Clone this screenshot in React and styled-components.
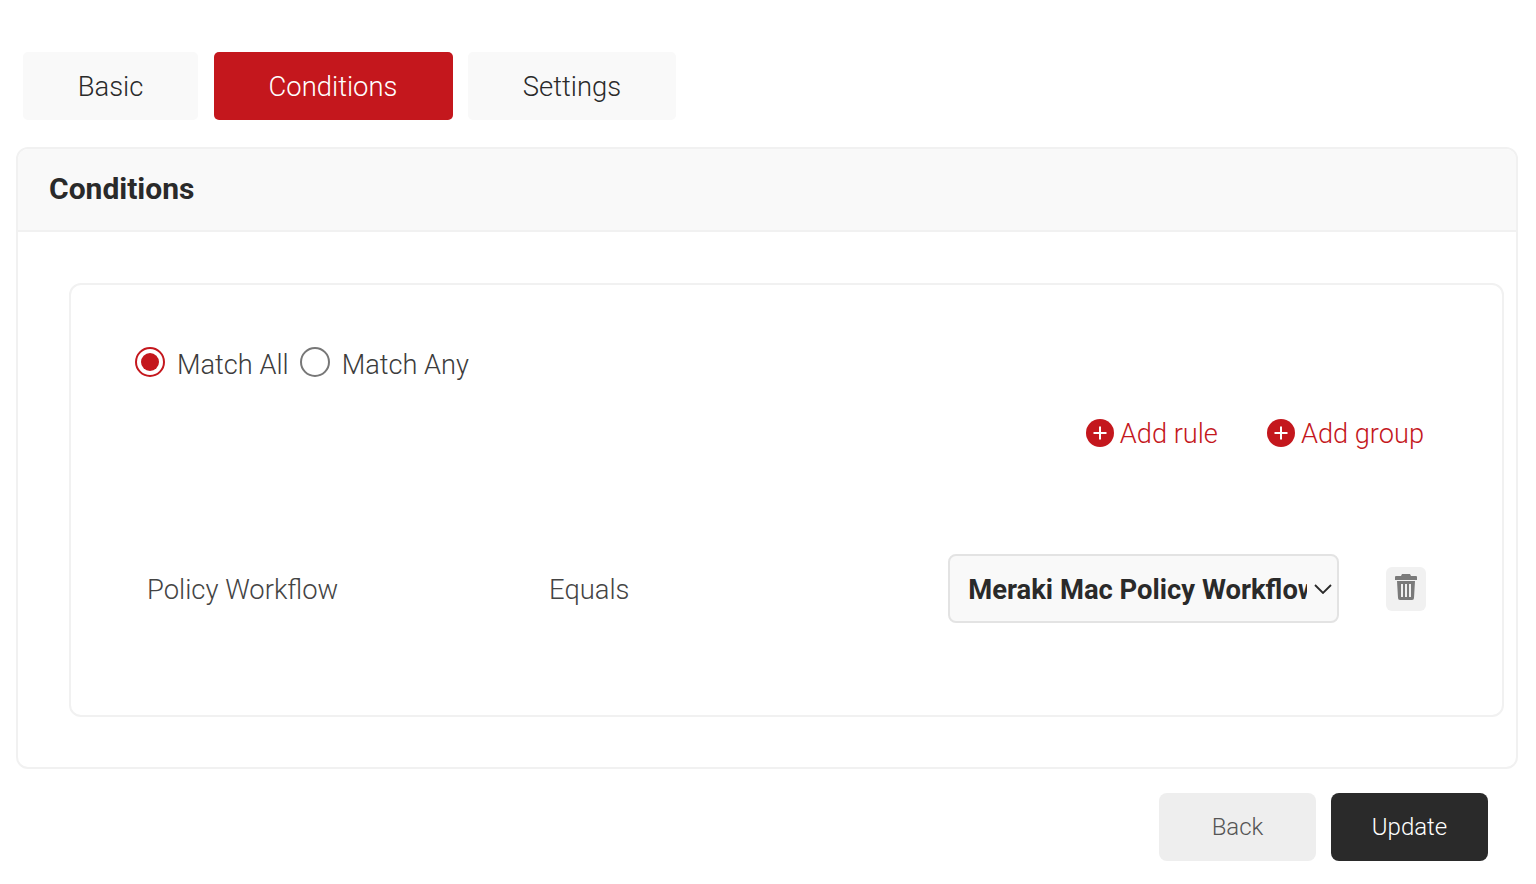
import React, { useState } from "react"
import styled, { createGlobalStyle } from "styled-components"

const Global = createGlobalStyle`
    html, body {
        margin: 0;
        background: #fff;
    }
    body {
        font-family: Roboto, "Liberation Sans", sans-serif;
        font-weight: 300;
        color: #2a2a2a;
    }
`

const Page = styled.div`
    width: 1536px;
    height: 884px;
    box-sizing: border-box;
    padding: 52px 18px 0 16px;
    overflow: hidden;
`

const Tabs = styled.div`
    display: flex;
    gap: 15.5px;
    padding-left: 7px;
    margin-bottom: 27px;
`

const Tab = styled.button`
    height: 68px;
    width: ${p => p.$width}px;
    padding: 2px 0 0;
    border: 0;
    border-radius: 5px;
    background: ${p => p.$active ? "#c4171d" : "#f9f9f9"};
    color: ${p => p.$active ? "#fff" : "#2a2a2a"};
    font: 300 27.4px Roboto, sans-serif;
`

const Card = styled.section`
    height: 622px;
    box-sizing: border-box;
    border: 2px solid #f1f1f1;
    border-radius: 12px;
    overflow: hidden;
`

const CardHeader = styled.header`
    height: 83px;
    box-sizing: border-box;
    display: flex;
    align-items: center;
    padding: 0 0 3px 31px;
    background: #f9f9f9;
    border-bottom: 2px solid #f1f1f1;
`

const CardTitle = styled.h2`
    margin: 0;
    font-size: 30px;
    font-weight: 700;
    color: #2a2a2a;
`

const CardBody = styled.div`
    padding: 51px 12px 0 51px;
`

const RuleBox = styled.div`
    height: 434px;
    box-sizing: border-box;
    border: 2px solid #f1f1f1;
    border-radius: 12px;
    padding: 62px 76px 0 64px;
`

const RadioRow = styled.div`
    display: flex;
    align-items: center;
    height: 36px;
`

const Radio = styled.span`
    width: 30px;
    height: 30px;
    box-sizing: border-box;
    border-radius: 50%;
    border: 2px solid ${p => p.$checked ? "#c4171d" : "#777"};
    display: flex;
    align-items: center;
    justify-content: center;
    margin-right: 12px;
    margin-top: -6px;

    &::after {
        content: "";
        width: 18px;
        height: 18px;
        border-radius: 50%;
        background: ${p => p.$checked ? "#c4171d" : "transparent"};
    }
`

const RadioLabel = styled.label`
    font-size: 27.2px;
    color: #3c3c3c;
    margin-right: 11px;
    line-height: 36px;
`

const Actions = styled.div`
    display: flex;
    justify-content: flex-end;
    gap: 49px;
    margin-top: 33px;
    padding-right: 2px;
`

const AddLink = styled.a`
    display: flex;
    align-items: center;
    gap: 6px;
    font-size: 27.2px;
    line-height: 36px;
    color: #c4171d;
`

const AddIcon = styled.svg`
    width: 28px;
    height: 28px;
    margin-top: -2px;
`

const Rule = styled.div`
    display: flex;
    align-items: center;
    margin-top: 102px;
    padding-left: 12px;
`

const RuleText = styled.span`
    width: ${p => p.$width}px;
    padding-top: 2px;
    font-size: 27.4px;
    color: #444;
`

const SelectBox = styled.div`
    width: 391px;
    height: 69px;
    box-sizing: border-box;
    display: flex;
    align-items: center;
    padding: 0 5px 0 18px;
    background: #f9f9f9;
    border: 2px solid #e3e3e3;
    border-radius: 8px;
`

const SelectValue = styled.span`
    flex: 1;
    overflow: hidden;
    white-space: nowrap;
    padding-top: 2px;
    font-size: 27.4px;
    font-weight: 700;
    color: #2a2a2a;
`

const Chevron = styled.svg`
    width: 18px;
    height: 10px;
    margin-left: 7px;
`

const Trash = styled.button`
    width: 40px;
    height: 44px;
    margin-left: 47px;
    padding: 0 0 3px;
    border: 0;
    border-radius: 6px;
    background: #f1f1f1;
    display: flex;
    align-items: center;
    justify-content: center;
`

const Footer = styled.footer`
    display: flex;
    justify-content: flex-end;
    gap: 15px;
    margin-top: 24px;
    padding-right: 30px;
`

const FooterButton = styled.button`
    width: 157px;
    height: 68px;
    padding: 0;
    border: 0;
    border-radius: 8px;
    background: ${p => p.$dark ? "#2a2a2a" : "#eeeeee"};
    color: ${p => p.$dark ? "#fff" : "#555"};
    font: 300 24px Roboto, sans-serif;
`

const PlusIcon = () => (
    <AddIcon viewBox="0 0 28 28">
        <circle cx="14" cy="14" r="14" fill="#c4171d" />
        <path d="M14 7.500v13M7.500 14h13" stroke="#fff" strokeWidth="2" />
    </AddIcon>
)

const App = () => {
    const [tab, setTab] = useState("Conditions")

    return (
        <Page>
            <Global />
            <Tabs>
                <Tab $width={175} $active={tab === "Basic"} onClick={() => setTab("Basic")}>Basic</Tab>
                <Tab $width={239} $active={tab === "Conditions"} onClick={() => setTab("Conditions")}>Conditions</Tab>
                <Tab $width={208} $active={tab === "Settings"} onClick={() => setTab("Settings")}>Settings</Tab>
            </Tabs>

            <Card>
                <CardHeader>
                    <CardTitle>Conditions</CardTitle>
                </CardHeader>
                <CardBody>
                    <RuleBox>
                        <RadioRow>
                            <Radio $checked />
                            <RadioLabel>Match All</RadioLabel>
                            <Radio />
                            <RadioLabel>Match Any</RadioLabel>
                        </RadioRow>

                        <Actions>
                            <AddLink><PlusIcon />Add rule</AddLink>
                            <AddLink><PlusIcon />Add group</AddLink>
                        </Actions>

                        <Rule>
                            <RuleText $width={404}>Policy Workflow</RuleText>
                            <RuleText $width={401}>Equals</RuleText>
                            <SelectBox>
                                <SelectValue>Meraki Mac Policy Workflow</SelectValue>
                                <Chevron viewBox="0 0 18 10" fill="none">
                                    <path d="M1 1l8 8 8-8" stroke="#2a2a2a" strokeWidth="1.800" />
                                </Chevron>
                            </SelectBox>
                            <Trash aria-label="Delete">
                                <svg width="22" height="26" viewBox="0 0 22 26" fill="#7a7a7a">
                                    <path d="M7 0h8l1 2h5a1 1 0 0 1 1 1v3H0V3a1 1 0 0 1 1-1h5z" />
                                    <path fillRule="evenodd" d="M2 7h18l-1 17a2 2 0 0 1-2 2H5a2 2 0 0 1-2-2zM6 10v13h2V10zM10 10v13h2V10zM14 10v13h2V10z" />
                                </svg>
                            </Trash>
                        </Rule>
                    </RuleBox>
                </CardBody>
            </Card>

            <Footer>
                <FooterButton>Back</FooterButton>
                <FooterButton $dark>Update</FooterButton>
            </Footer>
        </Page>
    )
}

export default App
